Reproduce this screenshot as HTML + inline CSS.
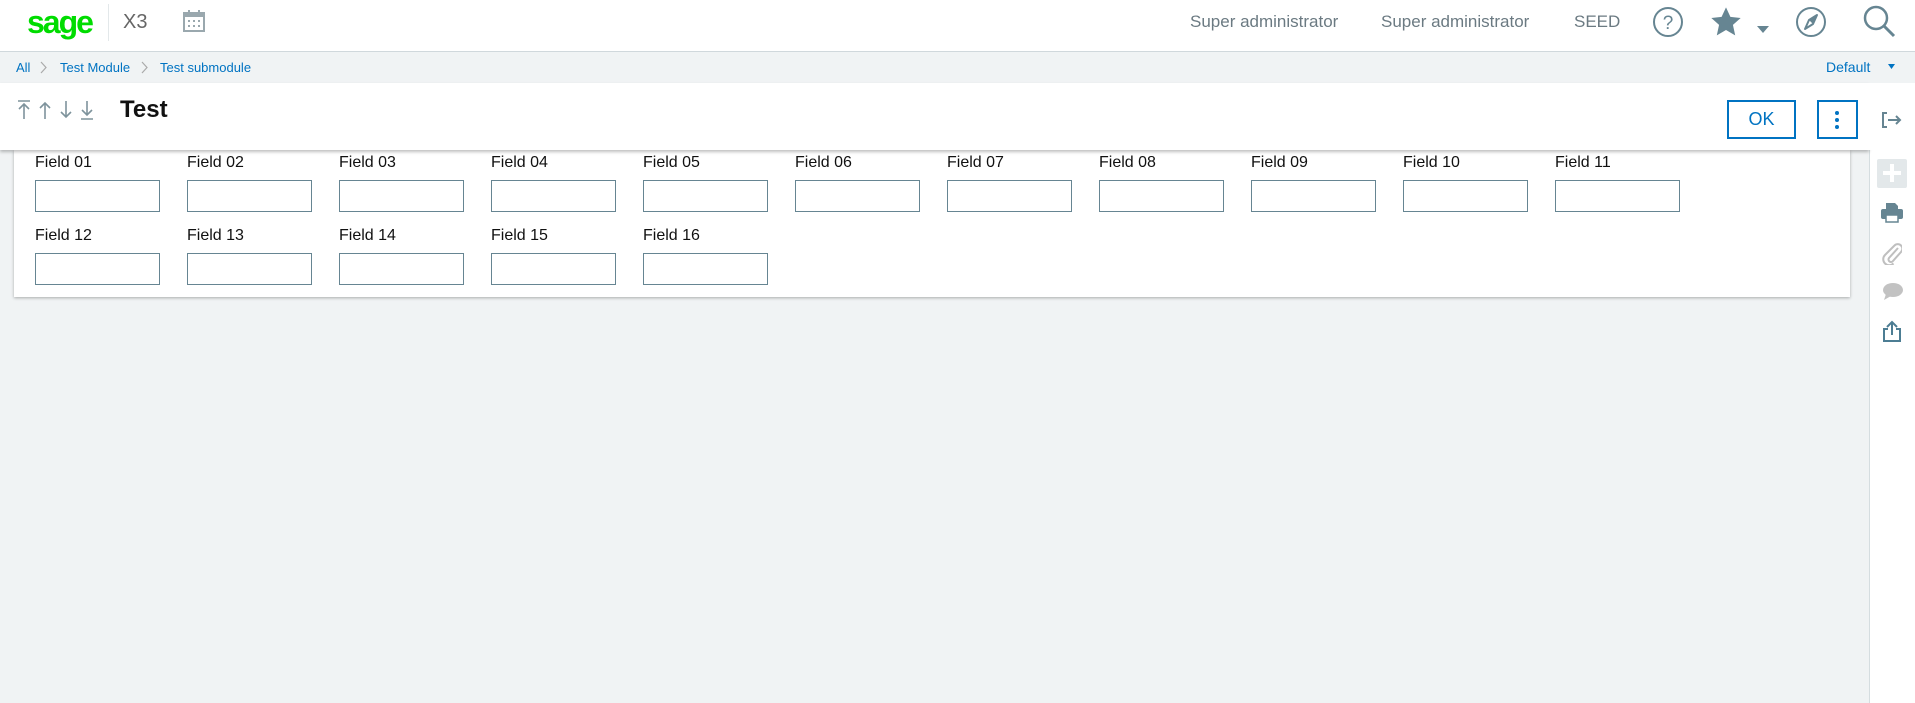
<!DOCTYPE html>
<html><head><meta charset="utf-8"><style>
*{margin:0;padding:0;box-sizing:border-box}
body{width:1915px;height:703px;overflow:hidden;background:#f0f3f4;font-family:"Liberation Sans",sans-serif;position:relative}
.abs{position:absolute}
#hdr{left:0;top:0;width:1915px;height:52px;background:#fff;border-bottom:1px solid #d0d8dc}
.ht{top:12px;font-size:17px;color:#6b7a82}
.bc{top:60px;font-size:13px;color:#0073c2}
#tb{left:0;top:83px;width:1915px;height:67px;background:#fff;z-index:2}
#tbs{left:0;top:83px;width:1869px;height:67px;box-shadow:0 2px 3px rgba(0,0,0,.25);z-index:1;background:#fff}
#card{left:14px;top:150px;width:1836px;height:147px;background:#fff;box-shadow:0 1px 3px rgba(0,0,0,.3)}
.lbl{font-size:16px;color:#111}
.inp{width:125px;height:32px;border:1px solid #668592;background:#fff}
#side{left:1869px;top:150px;width:46px;height:553px;background:#fff;border-left:1px solid #d5dde0}
</style></head><body>
<div id="hdr" class="abs">
  <div class="abs" style="left:27px;top:4px;font-size:32px;font-weight:bold;color:#00dc00;letter-spacing:-2px">sage</div>
  <div class="abs" style="left:108px;top:4px;width:1px;height:37px;background:#e3e8ea"></div>
  <div class="abs" style="left:123px;top:11px;font-size:20px;color:#666">X3</div>
  <svg class="abs" style="left:183px;top:10px" width="22" height="22" viewBox="0 0 22 22"><rect x="1" y="3" width="20" height="18" fill="none" stroke="#9aa8ae" stroke-width="2"/><rect x="1" y="3" width="20" height="4" fill="#9aa8ae"/><rect x="5" y="0" width="2" height="4" fill="#9aa8ae"/><rect x="15" y="0" width="2" height="4" fill="#9aa8ae"/><g fill="#9aa8ae"><rect x="5" y="10" width="2" height="2"/><rect x="10" y="10" width="2" height="2"/><rect x="15" y="10" width="2" height="2"/><rect x="5" y="15" width="2" height="2"/><rect x="10" y="15" width="2" height="2"/><rect x="15" y="15" width="2" height="2"/></g></svg>
  <div class="abs ht" style="left:1190px">Super administrator</div>
  <div class="abs ht" style="left:1381px">Super administrator</div>
  <div class="abs ht" style="left:1574px">SEED</div>
  <svg class="abs" style="left:1650px;top:5px" width="36" height="36" viewBox="0 0 36 36"><circle cx="18" cy="17" r="14" fill="none" stroke="#668592" stroke-width="2"/><text x="18" y="24" font-size="19" text-anchor="middle" fill="#668592" font-family="Liberation Sans">?</text></svg>
  <svg class="abs" style="left:1710px;top:6px" width="32" height="32" viewBox="0 0 24 24"><path d="M12 1l3.3 7.2 7.7.8-5.8 5.2 1.7 7.8L12 18l-6.9 4 1.7-7.8L1 9l7.7-.8z" fill="#668592"/></svg>
  <svg class="abs" style="left:1757px;top:26px" width="12" height="8"><path d="M0 0h12L6 7z" fill="#668592"/></svg>
  <svg class="abs" style="left:1794px;top:5px" width="34" height="34" viewBox="0 0 34 34"><circle cx="17" cy="17" r="14" fill="none" stroke="#668592" stroke-width="2"/><path d="M23 10l-4 9-8 5 4-9z" fill="none" stroke="#668592" stroke-width="2" stroke-linejoin="round"/><path d="M23 10l-8 5 4 4z" fill="#668592"/></svg>
  <svg class="abs" style="left:1862px;top:4px" width="36" height="36" viewBox="0 0 36 36"><circle cx="14" cy="14" r="11" fill="none" stroke="#668592" stroke-width="2.5"/><path d="M22 22l10 10" stroke="#668592" stroke-width="3"/></svg>
</div>
<div class="abs bc" style="left:16px">All</div>
<svg class="abs" style="left:40px;top:61px" width="8" height="13"><path d="M1 1l5 5.5L1 12" fill="none" stroke="#aaa" stroke-width="1.2"/></svg>
<div class="abs bc" style="left:60px">Test Module</div>
<svg class="abs" style="left:141px;top:61px" width="8" height="13"><path d="M1 1l5 5.5L1 12" fill="none" stroke="#aaa" stroke-width="1.2"/></svg>
<div class="abs bc" style="left:160px">Test submodule</div>
<div class="abs" style="left:1826px;top:59px;font-size:14px;color:#0073c2">Default</div>
<svg class="abs" style="left:1888px;top:64px" width="7" height="5"><path d="M0 0h7L3.5 5z" fill="#0073c2"/></svg>
<div id="tbs" class="abs"></div>
<div id="tb" class="abs">
  <svg class="abs" style="left:16px;top:16px" width="88" height="22" viewBox="0 0 88 22" fill="none" stroke="#7e939c" stroke-width="1.6"><path d="M2 2h12M8 5v15M3 10l5-5 5 5"/><path d="M29 4v16M24 9l5-5 5 5"/><path d="M50 2v16M45 13l5 5 5-5"/><path d="M71 2v14M66 11l5 5 5-5M65 20h12"/></svg>
  <div class="abs" style="left:120px;top:13px;font-size:24px;font-weight:bold;color:#111">Test</div>
  <div class="abs" style="left:1727px;top:17px;width:69px;height:39px;border:2px solid #0073c2;color:#0073c2;font-size:18px;text-align:center;line-height:35px">OK</div>
  <div class="abs" style="left:1817px;top:17px;width:41px;height:39px;border:2px solid #0073c2"><div style="position:absolute;left:16px;top:9px;width:4px;height:4px;border-radius:2px;background:#0073c2;box-shadow:0 7px 0 #0073c2,0 14px 0 #0073c2"></div></div>
  <svg class="abs" style="left:1881px;top:28px" width="22" height="18" viewBox="0 0 22 18" fill="none" stroke="#668592" stroke-width="2"><path d="M6 2H2v14h4M7 9h12M15 5l4 4-4 4"/></svg>
</div>
<div id="side" class="abs">
  <div class="abs" style="left:7px;top:9px;width:30px;height:29px;background:#e3e8ea;border-radius:2px"><div class="abs" style="left:6px;top:12px;width:18px;height:4px;background:#fff"></div><div class="abs" style="left:13px;top:5px;width:4px;height:18px;background:#fff"></div></div>
  <svg class="abs" style="left:11px;top:53px" width="22" height="20" viewBox="0 0 22 20"><path d="M5 0h9l3 3v3H5z" fill="#668592"/><rect x="0" y="6" width="22" height="10" rx="2" fill="#668592"/><rect x="5" y="12" width="12" height="7" fill="#fff" stroke="#668592" stroke-width="1.5"/></svg>
  <svg class="abs" style="left:12px;top:93px" width="20" height="22" viewBox="0 0 20 22"><path d="M16 5L7 15a2.5 2.5 0 0 0 3.5 3.5L19 9a4.5 4.5 0 0 0-6.5-6.5L3 12a6 6 0 0 0 8.5 8.5" fill="none" stroke="#bfbfbf" stroke-width="2"/></svg>
  <svg class="abs" style="left:12px;top:133px" width="22" height="18" viewBox="0 0 22 18"><ellipse cx="11" cy="7" rx="10" ry="7" fill="#c2c2c2"/><path d="M4 11l-2 6 7-4z" fill="#c2c2c2"/></svg>
  <svg class="abs" style="left:12px;top:170px" width="20" height="22" viewBox="0 0 20 22" fill="none" stroke="#4c7d93" stroke-width="2"><path d="M6 9H2v12h16V9h-4M10 15V2M5 7l5-5 5 5"/></svg>
</div>
<div id="card" class="abs">
  <div class="abs lbl" style="left:21px;top:4px">Field 01</div><div class="abs inp" style="left:21px;top:30px"></div>
  <div class="abs lbl" style="left:173px;top:4px">Field 02</div><div class="abs inp" style="left:173px;top:30px"></div>
  <div class="abs lbl" style="left:325px;top:4px">Field 03</div><div class="abs inp" style="left:325px;top:30px"></div>
  <div class="abs lbl" style="left:477px;top:4px">Field 04</div><div class="abs inp" style="left:477px;top:30px"></div>
  <div class="abs lbl" style="left:629px;top:4px">Field 05</div><div class="abs inp" style="left:629px;top:30px"></div>
  <div class="abs lbl" style="left:781px;top:4px">Field 06</div><div class="abs inp" style="left:781px;top:30px"></div>
  <div class="abs lbl" style="left:933px;top:4px">Field 07</div><div class="abs inp" style="left:933px;top:30px"></div>
  <div class="abs lbl" style="left:1085px;top:4px">Field 08</div><div class="abs inp" style="left:1085px;top:30px"></div>
  <div class="abs lbl" style="left:1237px;top:4px">Field 09</div><div class="abs inp" style="left:1237px;top:30px"></div>
  <div class="abs lbl" style="left:1389px;top:4px">Field 10</div><div class="abs inp" style="left:1389px;top:30px"></div>
  <div class="abs lbl" style="left:1541px;top:4px">Field 11</div><div class="abs inp" style="left:1541px;top:30px"></div>
  <div class="abs lbl" style="left:21px;top:77px">Field 12</div><div class="abs inp" style="left:21px;top:103px"></div>
  <div class="abs lbl" style="left:173px;top:77px">Field 13</div><div class="abs inp" style="left:173px;top:103px"></div>
  <div class="abs lbl" style="left:325px;top:77px">Field 14</div><div class="abs inp" style="left:325px;top:103px"></div>
  <div class="abs lbl" style="left:477px;top:77px">Field 15</div><div class="abs inp" style="left:477px;top:103px"></div>
  <div class="abs lbl" style="left:629px;top:77px">Field 16</div><div class="abs inp" style="left:629px;top:103px"></div>
</div>
</body></html>
